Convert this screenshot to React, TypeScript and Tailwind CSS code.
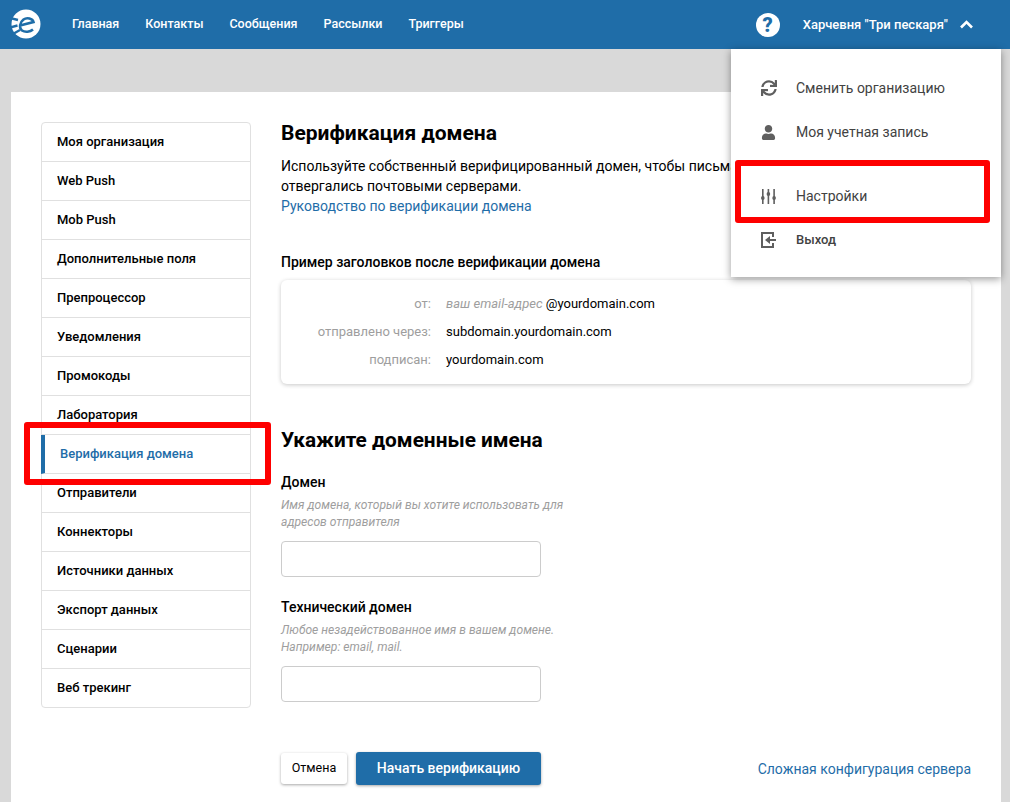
import React from "react";
import { FaSync, FaUser } from "react-icons/fa";

const menu = [
  "Моя организация",
  "Web Push",
  "Mob Push",
  "Дополнительные поля",
  "Препроцессор",
  "Уведомления",
  "Промокоды",
  "Лаборатория",
  "Верификация домена",
  "Отправители",
  "Коннекторы",
  "Источники данных",
  "Экспорт данных",
  "Сценарии",
  "Веб трекинг",
];

const Logo = () => (
  <svg width="30" height="30" viewBox="0 0 30 30" fill="none">
    <circle cx="15" cy="15" r="14.500" fill="#fff" />
    <path d="M-1 9 7 11M-1 18.500 6.500 16.500M1 25.500 9 21" stroke="#1f6da8" strokeWidth="2.400" />
    <path
      d="M9 16.500 22.500 13C21.500 9.500 16 8 12.500 10.500 8.500 13.500 8 19 11 21.500 14 23.500 19 23 22 20.500"
      stroke="#1f6da8"
      strokeWidth="2.600"
    />
  </svg>
);

const SlidersIcon = () => (
  <svg width="15" height="15" viewBox="0 0 15 15" fill="#5f5f5f">
    <rect x="1" y="0" width="1.600" height="15" />
    <rect x="6.600" y="0" width="1.600" height="15" />
    <rect x="12.300" y="0" width="1.600" height="15" />
    <ellipse cx="1.800" cy="9" rx="1.800" ry="2" />
    <ellipse cx="7.400" cy="5" rx="1.800" ry="2" />
    <ellipse cx="13.100" cy="9" rx="1.800" ry="2" />
  </svg>
);

const ExitIcon = () => (
  <svg width="16" height="16" viewBox="0 0 16 16" fill="none" stroke="#5f5f5f" strokeWidth="2">
    <path d="M12 5V1H1v14h11v-4" />
    <path d="M15 8H7" />
    <path d="M9 4 4 8l5 4Z" fill="#5f5f5f" stroke="none" />
  </svg>
);

export default function App() {
  return (
    <div className="relative w-[1010px] h-[802px] overflow-hidden bg-[#d9d9d9] font-['Roboto',sans-serif]">
      <header className="h-[49px] bg-[#1f6da8] flex items-center text-white text-[13px] font-medium">
        <div className="ml-[11px] w-[30px] h-[30px] -mt-[1px]">
          <Logo />
        </div>
        <nav className="ml-[31px] flex gap-[26px] text-[12.500px]">
          <span>Главная</span>
          <span>Контакты</span>
          <span>Сообщения</span>
          <span>Рассылки</span>
          <span>Триггеры</span>
        </nav>
        <div className="ml-auto flex items-center mr-[37px]">
          <div className="w-[24px] h-[24px] rounded-full bg-white flex items-center justify-center text-[#1f6da8] text-[20px] font-black leading-none">
            ?
          </div>
          <span className="ml-[23px]">Харчевня "Три пескаря"</span>
          <svg className="ml-[12px]" width="13" height="9" viewBox="0 0 13 9" fill="none" stroke="#fff" strokeWidth="2.600">
            <path d="M1 7.500 6.500 2 12 7.500" />
          </svg>
        </div>
      </header>

      <main className="mt-[43px] ml-[11px] w-[990px] h-[710px] bg-white pt-[30px] pl-[30px] pr-[30px] flex gap-[30px]">
        <aside className="w-[210px] h-[586px] border border-[#e0e0e0] rounded-[4px] shrink-0 flex flex-col">
          {menu.map((item, i) => {
            const active = item === "Верификация домена";
            return (
              <div
                key={item}
                className={
                  "h-[39px] shrink-0 flex items-center text-[13px] font-medium " +
                  (i < menu.length - 1 ? "border-b border-[#e0e0e0] " : "pb-px ") +
                  (active
                    ? "pl-[15px] border-l-[4px] -ml-px border-l-[#1f6da8] text-[#1f6da8]"
                    : "pl-[15px] text-black")
                }
              >
                {item}
              </div>
            );
          })}
        </aside>

        <section className="w-[690px] text-black">
          <h1 className="-mt-px text-[21px] leading-[24px] font-bold">Верификация домена</h1>
          <p className="mt-[11px] text-[14px] leading-[20px]">
            Используйте собственный верифицированный домен, чтобы письма не
            <br />
            отвергались почтовыми серверами.
          </p>
          <a className="block text-[14px] leading-[20px] text-[#1f6da8]">
            Руководство по верификации домена
          </a>

          <h2 className="mt-[36px] text-[14px] leading-[20px] font-medium">
            Пример заголовков после верификации домена
          </h2>
          <div className="mt-[8px] h-[104px] rounded-[6px] shadow-[0_1px_4px_rgba(0,0,0,0.22)] py-[10px] text-[13px] leading-[28px]">
            <div className="flex">
              <span className="w-[150px] text-right text-[#9e9e9e]">от:</span>
              <span className="ml-[15px]">
                <i className="text-[#9e9e9e]">ваш email-адрес</i> @yourdomain.com
              </span>
            </div>
            <div className="flex">
              <span className="w-[150px] text-right text-[#9e9e9e]">отправлено через:</span>
              <span className="ml-[15px]">subdomain.yourdomain.com</span>
            </div>
            <div className="flex">
              <span className="w-[150px] text-right text-[#9e9e9e]">подписан:</span>
              <span className="ml-[15px]">yourdomain.com</span>
            </div>
          </div>

          <h2 className="mt-[42px] text-[20.800px] leading-[28px] font-bold">Укажите доменные имена</h2>

          <h3 className="mt-[18px] text-[14px] leading-[20px] font-medium">Домен</h3>
          <p className="mt-[5px] w-[300px] text-[12.100px] leading-[17px] italic text-[#9e9e9e]">
            Имя домена, который вы хотите использовать для адресов отправителя
          </p>
          <div className="mt-[10px] w-[260px] h-[36px] border border-[#cccccc] rounded-[4px]" />

          <h3 className="mt-[20px] text-[14px] leading-[20px] font-medium">Технический домен</h3>
          <p className="mt-[5px] w-[300px] text-[12.100px] leading-[17px] italic text-[#9e9e9e]">
            Любое незадействованное имя в вашем домене.
            <br />
            Например: email, mail.
          </p>
          <div className="mt-[10px] w-[260px] h-[36px] border border-[#cccccc] rounded-[4px]" />

          <div className="mt-[50px] flex items-center">
            <button className="w-[66px] h-[31px] bg-white rounded-[3px] shadow-[0_1px_3px_rgba(0,0,0,0.35)] text-[12.500px]">
              Отмена
            </button>
            <button className="ml-[9px] w-[185px] h-[33px] bg-[#1f6da8] rounded-[3px] shadow-[0_1px_3px_rgba(0,0,0,0.35)] text-white text-[14px] font-medium">
              Начать верификацию
            </button>
            <a className="ml-auto pt-px text-[14px] text-[#1f6da8]">Сложная конфигурация сервера</a>
          </div>
        </section>
      </main>

      {/* dropdown lies over the page */}
      <div className="absolute left-[731px] top-[49px] w-[270px] h-[228px] bg-white shadow-[0_2px_8px_rgba(0,0,0,0.4)] text-[14px] text-[#424242]">
        <div className="absolute left-[30px] top-[31px] flex items-center h-[16px]">
          <FaSync className="w-[16px] h-[16px] text-[#5f5f5f]" />
          <span className="ml-[19px]">Сменить организацию</span>
        </div>
        <div className="absolute left-[30px] top-[75px] flex items-center h-[16px]">
          <FaUser className="w-[15px] h-[15px] text-[#5f5f5f]" />
          <span className="ml-[20px]">Моя учетная запись</span>
        </div>
        <div className="absolute left-[30px] top-[139px] flex items-center h-[16px]">
          <SlidersIcon />
          <span className="ml-[20px]">Настройки</span>
        </div>
        <div className="absolute left-[30px] top-[183px] flex items-center h-[16px]">
          <ExitIcon />
          <span className="ml-[19px] text-[13px] font-medium">Выход</span>
        </div>
      </div>

      {/* red annotation boxes */}
      <div className="absolute left-[735px] top-[160px] w-[255px] h-[63px] border-[6px] border-[#fe0000] rounded-[3px]" />
      <div className="absolute left-[24px] top-[422px] w-[247px] h-[63px] border-[6px] border-[#fe0000] rounded-[3px]" />
    </div>
  );
}
